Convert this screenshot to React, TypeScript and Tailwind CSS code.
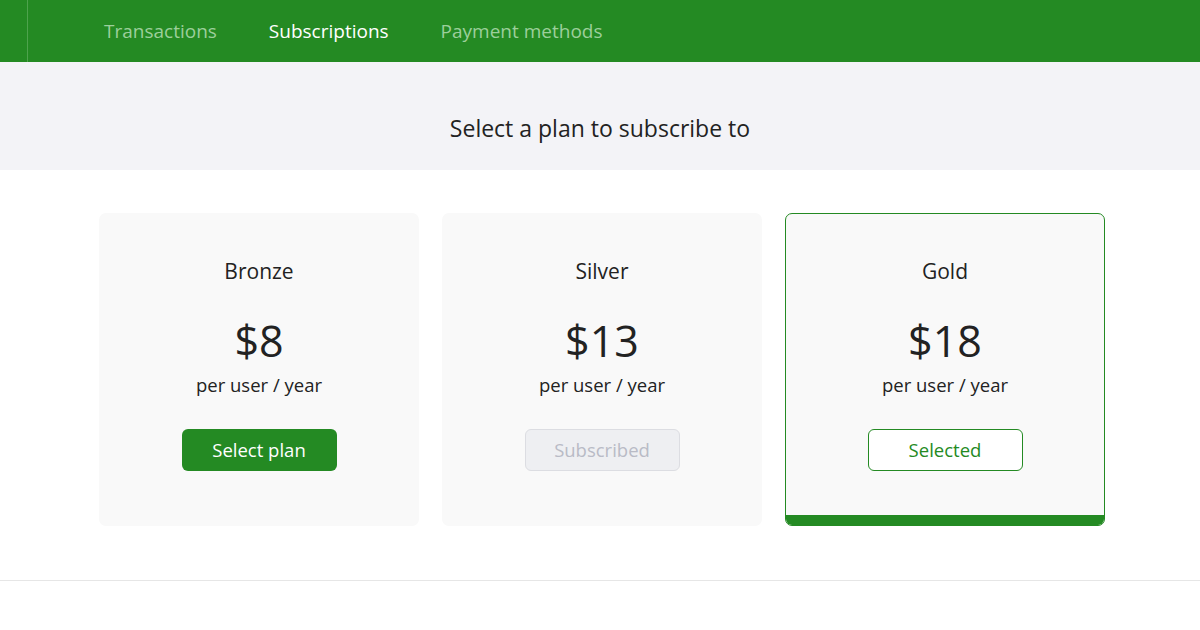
import React from "react";

const plans = [
  { name: "Bronze", price: "$8", state: "select" },
  { name: "Silver", price: "$13", state: "subscribed" },
  { name: "Gold", price: "$18", state: "selected" },
];

export default function App() {
  return (
    <div className="w-[1200px] h-[630px] bg-white text-[#222222] overflow-hidden" style={{ fontFamily: "'Open Sans', 'Noto Sans', sans-serif" }}>
      <header className="h-[62px] bg-[#248a23] flex items-stretch">
        <div className="w-[28px] border-r border-[#4ea34d]" />
        <nav className="flex items-center gap-[52px] pl-[76px] text-[19px]">
          <span className="text-[#9ccf9b]">Transactions</span>
          <span className="text-white">Subscriptions</span>
          <span className="text-[#9ccf9b]">Payment methods</span>
        </nav>
      </header>
      <div className="h-[108px] bg-[#f3f3f7] flex items-center justify-center pt-[24px]">
        <h1 className="text-[23px] text-[#222222]">Select a plan to subscribe to</h1>
      </div>
      <div className="flex justify-center gap-[23px] pt-[43px] pb-[54px] pl-[4px] border-b border-[#e6e6e6]">
        {plans.map((p) => {
          const selected = p.state === "selected";
          return (
            <div
              key={p.name}
              className={
                "w-[320px] h-[313px] rounded-[7px] bg-[#f9f9f9] flex flex-col overflow-hidden " +
                (selected ? "border border-[#248a23]" : "")
              }
            >
              <div className={"flex-1 flex flex-col items-center " + (selected ? "pt-[43px]" : "pt-[44px]")}>
                <div className="text-[21px] leading-[28px]">{p.name}</div>
                <div className="text-[43px] leading-[48px] mt-[32px]">{p.price}</div>
                <div className="text-[18.5px] leading-[24px] mt-[8px]">per user / year</div>
                {p.state === "select" && (
                  <button className="mt-[32px] w-[155px] h-[42px] rounded-[6px] bg-[#248a23] text-white text-[18.5px]">
                    Select plan
                  </button>
                )}
                {p.state === "subscribed" && (
                  <button className="mt-[32px] w-[155px] h-[42px] rounded-[6px] bg-[#eeeff2] border border-[#dcdde2] text-[#b9bbc6] text-[18.5px]">
                    Subscribed
                  </button>
                )}
                {selected && (
                  <button className="mt-[32px] w-[155px] h-[42px] rounded-[6px] bg-white border border-[#248a23] text-[#248a23] text-[18.5px]">
                    Selected
                  </button>
                )}
              </div>
              {selected && <div className="h-[10px] bg-[#248a23]" />}
            </div>
          );
        })}
      </div>
    </div>
  );
}
